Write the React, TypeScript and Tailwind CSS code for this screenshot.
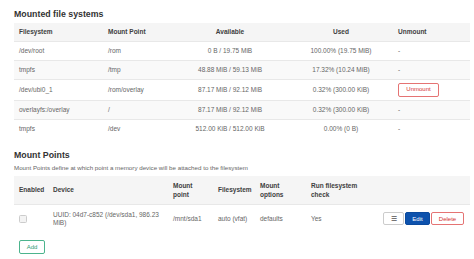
type MountRow = {
  fs: string;
  point: string;
  available: string;
  used: string;
  canUnmount: boolean;
};

const mounts: MountRow[] = [
  { fs: "/dev/root", point: "/rom", available: "0 B / 19.75 MiB", used: "100.00% (19.75 MiB)", canUnmount: false },
  { fs: "tmpfs", point: "/tmp", available: "48.88 MiB / 59.13 MiB", used: "17.32% (10.24 MiB)", canUnmount: false },
  { fs: "/dev/ubi0_1", point: "/rom/overlay", available: "87.17 MiB / 92.12 MiB", used: "0.32% (300.00 KiB)", canUnmount: true },
  { fs: "overlayfs:/overlay", point: "/", available: "87.17 MiB / 92.12 MiB", used: "0.32% (300.00 KiB)", canUnmount: false },
  { fs: "tmpfs", point: "/dev", available: "512.00 KiB / 512.00 KiB", used: "0.00% (0 B)", canUnmount: false },
];

const thClass = "px-[5px] align-middle font-bold text-[#404040]";
const tdClass = "px-[5px] align-middle";

export default function App() {
  return (
    <div className="h-[259px] w-[474px] overflow-hidden bg-white px-[14px] font-['Liberation_Sans',Arial,sans-serif] text-[6.5px] text-[#666]">
      <h2 className="pt-[8px] text-[8.8px] leading-[12px] font-bold text-[#333]">Mounted file systems</h2>

      <table className="mt-[3px] w-[456px] table-fixed border-collapse">
        <thead>
          <tr className="h-[18px] bg-[#f5f5f5]">
            <th className={`${thClass} w-[89px] text-left`}>Filesystem</th>
            <th className={`${thClass} w-[68px] text-left`}>Mount Point</th>
            <th className={`${thClass} w-[118px] text-center`}>Available</th>
            <th className={`${thClass} w-[104px] text-center`}>Used</th>
            <th className={`${thClass} w-[77px] text-left`}>Unmount</th>
          </tr>
        </thead>
        <tbody>
          {mounts.map((m, i) => (
            <tr
              key={m.fs + m.point}
              className={`border-t border-[#e8e8e8] ${m.canUnmount ? "h-[21px]" : "h-[19px]"} ${i % 2 === 1 ? "bg-[#f9f9f9]" : "bg-white"}`}
            >
              <td className={tdClass}>{m.fs}</td>
              <td className={tdClass}>{m.point}</td>
              <td className={`${tdClass} text-center`}>{m.available}</td>
              <td className={`${tdClass} text-center`}>{m.used}</td>
              <td className={tdClass}>
                {m.canUnmount ? (
                  <button
                    type="button"
                    className="h-[14px] w-[41px] rounded-[2px] border border-[#e57373] bg-white text-[6px] text-[#d32f2f]"
                  >
                    Unmount
                  </button>
                ) : (
                  "-"
                )}
              </td>
            </tr>
          ))}
        </tbody>
      </table>

      <h2 className="mt-[11px] text-[8.8px] leading-[12px] font-bold text-[#333]">Mount Points</h2>
      <p className="mt-[2px] text-[6.2px] leading-[9px]">
        Mount Points define at which point a memory device will be attached to the filesystem
      </p>

      <table className="mt-[4px] w-[456px] table-fixed border-collapse">
        <thead>
          <tr className="h-[28px] bg-[#f5f5f5] text-left leading-[9px]">
            <th className={`${thClass} w-[34px]`}>Enabled</th>
            <th className={`${thClass} w-[120px]`}>Device</th>
            <th className={`${thClass} w-[45px]`}>
              Mount
              <br />
              point
            </th>
            <th className={`${thClass} w-[42px]`}>Filesystem</th>
            <th className={`${thClass} w-[51px]`}>
              Mount
              <br />
              options
            </th>
            <th className={`${thClass} w-[64px]`}>
              Run filesystem
              <br />
              check
            </th>
            <th className={`${thClass} w-[100px]`}></th>
          </tr>
        </thead>
        <tbody>
          <tr className="h-[29px] border-t border-[#e8e8e8] leading-[8px]">
            <td className={tdClass}>
              <span className="block h-[8px] w-[8px] rounded-[1.5px] border border-[#ccc] bg-[#f3f3f3]" />
            </td>
            <td className={tdClass}>
              UUID: 04d7-c852 (/dev/sda1, 986.23
              <br />
              MiB)
            </td>
            <td className={tdClass}>/mnt/sda1</td>
            <td className={tdClass}>auto (vfat)</td>
            <td className={tdClass}>defaults</td>
            <td className={tdClass}>Yes</td>
            <td className="pr-[6px] align-middle">
              <div className="flex justify-end gap-[1px]">
                <button
                  type="button"
                  className="h-[13px] w-[21px] rounded-[2px] border border-[#ccc] bg-white text-[7px] leading-none text-[#555]"
                >
                  ☰
                </button>
                <button
                  type="button"
                  className="h-[13px] w-[25px] rounded-[2px] border border-[#0b4a9e] bg-[#0d52ad] text-[6px] text-white"
                >
                  Edit
                </button>
                <button
                  type="button"
                  className="h-[13px] w-[33px] rounded-[2px] border border-[#e57373] bg-white text-[6px] text-[#d32f2f]"
                >
                  Delete
                </button>
              </div>
            </td>
          </tr>
        </tbody>
      </table>

      <button
        type="button"
        className="mt-[7px] ml-[5px] h-[14px] w-[26px] rounded-[2px] border border-[#4cb48d] bg-white text-[6px] text-[#2e9b73]"
      >
        Add
      </button>
    </div>
  );
}
